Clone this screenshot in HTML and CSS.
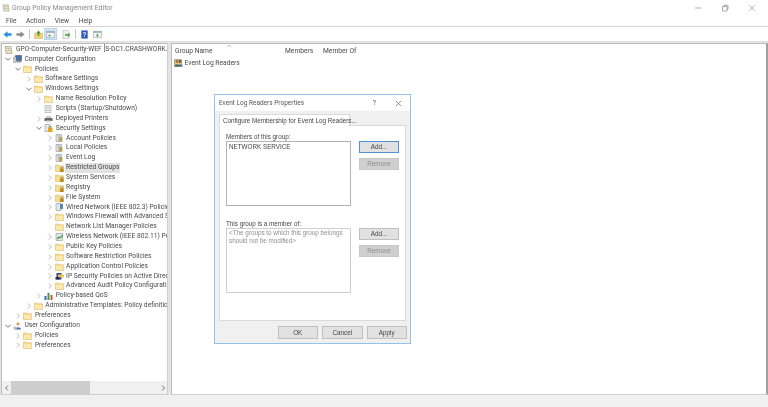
FILE: index.html
```html
<!DOCTYPE html>
<html lang="en">
<head>
<meta charset="utf-8">
<title>Group Policy Management Editor</title>
<link rel="stylesheet" href="styles.css">
</head>
<body>
<svg class="defs" width="0" height="0" aria-hidden="true">
  <symbol id="folder" viewBox="0 0 9 8"><path d="M.5 1h3l.8.8h4.200v5.700H.5z" fill="#f6dc8f" stroke="#dcbc6c" stroke-width=".6"/><path d="M1 3h7.200v4H1z" fill="#fbe9b0"/></symbol>
  <symbol id="lockfolder" viewBox="0 0 9 8"><path d="M.5 1h3l.8.8h4.200v5.700H.5z" fill="#f6dc8f" stroke="#dcbc6c" stroke-width=".6"/><path d="M5 4.500h3.600V8H5z" fill="#b98a1c"/><path d="M5.800 4.500V3.400h2v1.100" fill="none" stroke="#777" stroke-width=".6"/></symbol>
  <symbol id="doc" viewBox="0 0 9 8"><path d="M1 .5h6v7H1z" fill="#eef0f2" stroke="#9aa3aa" stroke-width=".6"/><path d="M2 2.500h4M2 4h4M2 5.500h4" stroke="#a8b0b8" stroke-width=".5"/></symbol>
  <symbol id="policy" viewBox="0 0 9 8"><path d="M1 .5h5.500v7H1z" fill="#dfe5ea" stroke="#8b949c" stroke-width=".6"/><path d="M3.500 3h4v4.500h-4z" fill="#b8a46a"/><path d="M2 2h3.500" stroke="#778" stroke-width=".5"/></symbol>
  <symbol id="printer" viewBox="0 0 9 8"><path d="M2 1h5v2H2z" fill="#ccc"/><path d="M.5 3h8v3H.5z" fill="#666"/><path d="M2 5.500h5v2H2z" fill="#ddd"/></symbol>
  <symbol id="shield" viewBox="0 0 9 8"><path d="M1 .5h5v7H1z" fill="#e5e8ea" stroke="#8b949c" stroke-width=".6"/><path d="M4 3.500h4.500V8H4z" fill="#e0a41e"/><path d="M5.200 3.500V2.400h2v1.100" fill="none" stroke="#666" stroke-width=".6"/></symbol>
  <symbol id="wired" viewBox="0 0 9 8"><path d="M1 .5h5v7H1z" fill="#e3e7eb" stroke="#8b949c" stroke-width=".6"/><path d="M5 1h3v5H5z" fill="#5b86b8"/></symbol>
  <symbol id="wireless" viewBox="0 0 9 8"><path d="M1 .5h6.500v7H1z" fill="#e3e7eb" stroke="#8b949c" stroke-width=".6"/><path d="M2 6l2-2 1.200 1L8 1.500" fill="none" stroke="#3a9a3a" stroke-width="1.100"/></symbol>
  <symbol id="ipsec" viewBox="0 0 9 8"><path d="M1.500 1h5v6.500h-5z" fill="#33477f"/><path d="M3 2.500h6v3H3z" fill="#e5c65a"/><path d="M.5 5h4v2.500h-4z" fill="#222c55"/></symbol>
  <symbol id="qos" viewBox="0 0 9 8"><path d="M.5 4h2v4h-2z" fill="#2b6cb8"/><path d="M3.500 1h2v7h-2z" fill="#3f9a48"/><path d="M6.500 3h2v5h-2z" fill="#d9542e"/></symbol>
  <symbol id="computer" viewBox="0 0 9 8"><path d="M2.500 .5h6v5h-6z" fill="#4a6fa8" stroke="#2c3e66" stroke-width=".5"/><path d="M.5 2h2.500v5.500H.5z" fill="#cfd5dc" stroke="#677" stroke-width=".4"/><path d="M3.500 6h5v1.500h-5z" fill="#8a97a8"/></symbol>
  <symbol id="user" viewBox="0 0 9 8"><circle cx="5" cy="2" r="1.700" fill="#d7a877"/><path d="M2 7.500c0-3 6-3 6 0z" fill="#4a76b0"/><path d="M.5 4.500h3v3h-3z" fill="#b8c4d0"/></symbol>
  <symbol id="gpo" viewBox="0 0 9 8"><path d="M1 .5h6l1 7H2z" fill="#ede4c8" stroke="#9b9278" stroke-width=".6"/><path d="M2.500 2.500h4M2.500 4.500h4" stroke="#998" stroke-width=".5"/></symbol>
  <symbol id="group" viewBox="0 0 9 8"><path d="M.5 .5h7v7h-7z" fill="#d9c68d" stroke="#7d6b3c" stroke-width=".5"/><circle cx="3" cy="2.500" r="1.400" fill="#a8763c"/><circle cx="6" cy="2.500" r="1.400" fill="#7a5a30"/><path d="M.8 7.500c0-3 4.500-3 4.500 0z" fill="#3e6a3a"/><path d="M4 7.500c0-3 4.800-3 4.800 0z" fill="#4d73a8"/></symbol>
  <symbol id="open" viewBox="0 0 8 8"><path d="M2.800 1.500l2.500 2.500-2.500 2.500" fill="none" stroke="#adadad" stroke-width=".8"/></symbol>
  <symbol id="down" viewBox="0 0 8 8"><path d="M1.500 2.800l2.500 2.500 2.500-2.500" fill="none" stroke="#555" stroke-width=".8"/></symbol>
</svg>

<div class="window">
  <header class="titlebar">
    <svg class="ti"><use href="#gpo"/></svg>
    <span class="title">Group Policy Management Editor</span>
    <span class="winbtns">
      <svg class="wb" viewBox="0 0 8 8"><path d="M1 4h6" stroke="#999" stroke-width=".8"/></svg>
      <svg class="wb" viewBox="0 0 8 8"><path d="M1.500 2.500h4.500v4.500H1.500zM3 2.500V1.200h4v4H6" fill="none" stroke="#888" stroke-width=".7"/></svg>
      <svg class="wb" viewBox="0 0 8 8"><path d="M1.200 1.200l5.600 5.600M6.800 1.200L1.200 6.800" stroke="#999" stroke-width=".7"/></svg>
    </span>
  </header>
  <nav class="menubar"><span>File</span><span>Action</span><span>View</span><span>Help</span></nav>
  <div class="toolbar">
    <svg class="tb" viewBox="0 0 10 10"><path d="M.5 5L5 1.500v2h4.500v3H5v2z" fill="#2a8fdc"/></svg>
    <svg class="tb" viewBox="0 0 10 10"><path d="M9.500 5L5 1.500v2H.5v3H5v2z" fill="#8c8c8c"/></svg>
    <i class="sep"></i>
    <svg class="tb" viewBox="0 0 10 10"><path d="M.5 3.500h9v6h-9z" fill="#eed27a" stroke="#c9a94e" stroke-width=".5"/><path d="M5 .5L2.500 3.500h1.500v3h2v-3h1.500z" fill="#4a9a3a"/></svg>
    <span class="tb-on"><svg class="tb" viewBox="0 0 10 10"><path d="M.5 1.500h9v7h-9z" fill="#f4f6f7" stroke="#8b949c" stroke-width=".6"/><path d="M.5 1.500h9v1.500h-9z" fill="#8fa3b0"/><path d="M4 5l2 2H2z" fill="#4a9a3a"/></svg></span>
    <svg class="tb gapl" viewBox="0 0 10 10"><path d="M1 .5h5l2 2v7H1z" fill="#f1f2f3" stroke="#a5abb0" stroke-width=".6"/><path d="M3.500 4.500h3v-1.500l3 2.500-3 2.500v-1.500h-3z" fill="#56a83e"/></svg>
    <i class="sep"></i>
    <svg class="tb" viewBox="0 0 10 10"><path d="M1.500 .5h7v9h-7z" fill="#2b55b8"/><text x="5" y="7.500" text-anchor="middle" class="q">?</text></svg>
    <svg class="tb" viewBox="0 0 10 10"><path d="M.5 1.500h9v7h-9z" fill="#f1f4f5" stroke="#8b949c" stroke-width=".6"/><path d="M.5 1.500h9v1.500h-9z" fill="#8fa3b0"/><path d="M4 4l2.500 2L4 8z" fill="#4a9a3a"/></svg>
  </div>

  <main class="panes">
    <section class="left">
      <div class="tree">
        <div class="row d0 root"><svg class="ic"><use href="#gpo"/></svg><span class="tx">GPO-Computer-Security-WEF [S-DC1.CRASHWORK.COM] Policy</span></div>
        <div class="row d0"><svg class="ar"><use href="#down"/></svg><svg class="ic"><use href="#computer"/></svg><span class="tx">Computer Configuration</span></div>
        <div class="row d1"><svg class="ar"><use href="#down"/></svg><svg class="ic"><use href="#folder"/></svg><span class="tx">Policies</span></div>
        <div class="row d2"><svg class="ar"><use href="#open"/></svg><svg class="ic"><use href="#folder"/></svg><span class="tx">Software Settings</span></div>
        <div class="row d2"><svg class="ar"><use href="#down"/></svg><svg class="ic"><use href="#folder"/></svg><span class="tx">Windows Settings</span></div>
        <div class="row d3"><svg class="ar"><use href="#open"/></svg><svg class="ic"><use href="#folder"/></svg><span class="tx">Name Resolution Policy</span></div>
        <div class="row d3"><i class="ar"></i><svg class="ic"><use href="#doc"/></svg><span class="tx">Scripts (Startup/Shutdown)</span></div>
        <div class="row d3"><svg class="ar"><use href="#open"/></svg><svg class="ic"><use href="#printer"/></svg><span class="tx">Deployed Printers</span></div>
        <div class="row d3"><svg class="ar"><use href="#down"/></svg><svg class="ic"><use href="#shield"/></svg><span class="tx">Security Settings</span></div>
        <div class="row d4"><svg class="ar"><use href="#open"/></svg><svg class="ic"><use href="#policy"/></svg><span class="tx">Account Policies</span></div>
        <div class="row d4"><svg class="ar"><use href="#open"/></svg><svg class="ic"><use href="#policy"/></svg><span class="tx">Local Policies</span></div>
        <div class="row d4"><svg class="ar"><use href="#open"/></svg><svg class="ic"><use href="#policy"/></svg><span class="tx">Event Log</span></div>
        <div class="row d4"><svg class="ar"><use href="#open"/></svg><svg class="ic"><use href="#lockfolder"/></svg><span class="tx sel">Restricted Groups</span></div>
        <div class="row d4"><svg class="ar"><use href="#open"/></svg><svg class="ic"><use href="#lockfolder"/></svg><span class="tx">System Services</span></div>
        <div class="row d4"><svg class="ar"><use href="#open"/></svg><svg class="ic"><use href="#lockfolder"/></svg><span class="tx">Registry</span></div>
        <div class="row d4"><svg class="ar"><use href="#open"/></svg><svg class="ic"><use href="#lockfolder"/></svg><span class="tx">File System</span></div>
        <div class="row d4"><svg class="ar"><use href="#open"/></svg><svg class="ic"><use href="#wired"/></svg><span class="tx">Wired Network (IEEE 802.3) Policies</span></div>
        <div class="row d4"><svg class="ar"><use href="#open"/></svg><svg class="ic"><use href="#folder"/></svg><span class="tx">Windows Firewall with Advanced Security</span></div>
        <div class="row d4"><i class="ar"></i><svg class="ic"><use href="#folder"/></svg><span class="tx">Network List Manager Policies</span></div>
        <div class="row d4"><svg class="ar"><use href="#open"/></svg><svg class="ic"><use href="#wireless"/></svg><span class="tx">Wireless Network (IEEE 802.11) Policies</span></div>
        <div class="row d4"><svg class="ar"><use href="#open"/></svg><svg class="ic"><use href="#folder"/></svg><span class="tx">Public Key Policies</span></div>
        <div class="row d4"><svg class="ar"><use href="#open"/></svg><svg class="ic"><use href="#folder"/></svg><span class="tx">Software Restriction Policies</span></div>
        <div class="row d4"><svg class="ar"><use href="#open"/></svg><svg class="ic"><use href="#folder"/></svg><span class="tx">Application Control Policies</span></div>
        <div class="row d4"><svg class="ar"><use href="#open"/></svg><svg class="ic"><use href="#ipsec"/></svg><span class="tx">IP Security Policies on Active Directory</span></div>
        <div class="row d4"><svg class="ar"><use href="#open"/></svg><svg class="ic"><use href="#folder"/></svg><span class="tx">Advanced Audit Policy Configuration</span></div>
        <div class="row d3"><svg class="ar"><use href="#open"/></svg><svg class="ic"><use href="#qos"/></svg><span class="tx">Policy-based QoS</span></div>
        <div class="row d2"><svg class="ar"><use href="#open"/></svg><svg class="ic"><use href="#folder"/></svg><span class="tx">Administrative Templates: Policy definitions</span></div>
        <div class="row d1"><svg class="ar"><use href="#open"/></svg><svg class="ic"><use href="#folder"/></svg><span class="tx">Preferences</span></div>
        <div class="row d0"><svg class="ar"><use href="#down"/></svg><svg class="ic"><use href="#user"/></svg><span class="tx">User Configuration</span></div>
        <div class="row d1"><svg class="ar"><use href="#open"/></svg><svg class="ic"><use href="#folder"/></svg><span class="tx">Policies</span></div>
        <div class="row d1"><svg class="ar"><use href="#open"/></svg><svg class="ic"><use href="#folder"/></svg><span class="tx">Preferences</span></div>
      </div>
      <div class="hscroll">
        <svg class="sa" viewBox="0 0 8 8"><path d="M5 1.500L2.500 4 5 6.500" fill="none" stroke="#666" stroke-width=".9"/></svg>
        <div class="track"><div class="thumb"></div></div>
        <svg class="sa" viewBox="0 0 8 8"><path d="M3 1.500L5.500 4 3 6.500" fill="none" stroke="#666" stroke-width=".9"/></svg>
      </div>
    </section>
    <section class="right">
      <div class="listhead">
        <span class="c1">Group Name</span><span class="c2">Members</span><span class="c3">Member Of</span>
        <svg class="caret" viewBox="0 0 6 4"><path d="M.8 3.200L3 1l2.200 2.200" fill="none" stroke="#aaa" stroke-width=".7"/></svg>
      </div>
      <div class="listrow"><svg class="ic"><use href="#group"/></svg><span>Event Log Readers</span></div>
    </section>
  </main>
  <footer class="status"></footer>
</div>

<div class="dialog">
  <div class="dlg-title"><span>Event Log Readers Properties</span>
    <span class="dlg-btns"><b class="help">?</b>
      <svg class="dlg-x" viewBox="0 0 8 8"><path d="M1 1l6 6M7 1L1 7" stroke="#555" stroke-width=".7"/></svg>
    </span>
  </div>
  <div class="tabs"><span class="tab">Configure Membership for Event Log Readers...</span></div>
  <div class="panel">
    <div class="label">Members of this group:</div>
    <div class="split">
      <div class="listbox"><span class="item">NETWORK SERVICE</span></div>
      <div class="sidebtns"><button class="btn primary">Add...</button><button class="btn off">Remove</button></div>
    </div>
    <div class="label second">This group is a member of:</div>
    <div class="split">
      <div class="listbox muted"><span class="item">&lt;The groups to which this group belongs<br>should not be modified&gt;</span></div>
      <div class="sidebtns"><button class="btn">Add...</button><button class="btn off">Remove</button></div>
    </div>
  </div>
  <div class="dlg-foot"><button class="btn">OK</button><button class="btn">Cancel</button><button class="btn">Apply</button></div>
</div>
</body>
</html>
```

FILE: styles.css
```css
* { box-sizing: border-box; }
html, body { margin: 0; height: 100%; overflow: hidden; background: #fff; }
body { position: relative; width: 768px; height: 407px; font-family: Roboto, sans-serif; font-size: 6.700px; color: #4a4a4a; filter: blur(.4px); }
.defs { position: absolute; }

.window { display: flex; flex-direction: column; height: 407px; }
.titlebar { height: 15px; display: flex; align-items: center; padding-left: 2px; background: #fff; flex: none; }
.ti { width: 8px; height: 8px; }
.title { margin-left: 2px; color: #8a8a8a; font-size: 6.900px; padding-top: 1px; }
.winbtns { margin-left: auto; display: flex; gap: 19px; padding-right: 12px; }
.wb { width: 8px; height: 8px; }

.menubar { height: 12px; flex: none; display: flex; align-items: center; padding-left: 6px; gap: 9.500px; border-bottom: 1px solid #d4d4d4; }
.toolbar { height: 14px; flex: none; display: flex; align-items: center; padding-left: 3px; gap: 4px; background: #fff; }
.tb { width: 9px; height: 9px; flex: none; display: block; }
.tb-on { background: #d5e8f6; border: 1px solid #b5d5ec; padding: .500px 1px; margin-left: -3px; }
.gapl { margin-left: 1px; }
.sep { width: 1px; height: 10px; background: #c8c8c8; }
.q { fill: #fff; font-size: 7px; font-family: "Liberation Sans", sans-serif; font-weight: 700; }

.panes { flex: 1; min-height: 0; display: flex; gap: 3px; background: #e4e4e4; padding: 1px 0 0 1px; border-top: 1px solid #e0e0e0; }
.left { width: 167px; flex: none; background: #fff; display: flex; flex-direction: column; border-top: 1px solid #bcbcbc; border-left: 1px solid #bcbcbc; border-right: 1px solid #cfcfcf; border-bottom: 1px solid #cfcfcf; overflow: hidden; }
.tree { flex: 1; min-height: 0; overflow: hidden; padding-top: .700px; }
.row { display: flex; align-items: center; height: 9.870px; white-space: nowrap; }
.d0 { padding-left: 2px; }
.d1 { padding-left: 12.400px; }
.d2 { padding-left: 22.800px; }
.d3 { padding-left: 33.200px; }
.d4 { padding-left: 43.600px; }
.ar { width: 8px; height: 8px; flex: none; display: block; margin-right: 1px; }
.ic { width: 9px; height: 8px; flex: none; margin-right: 1.500px; }
.root .ic { margin-right: 2px; }
.tx { padding: 0 1px; line-height: 9.500px; }
.sel { background: #e2e2e2; }
.hscroll { height: 13px; flex: none; display: flex; align-items: center; background: #f0f0f0; }
.sa { width: 8px; height: 8px; flex: none; margin: 0 .500px; }
.track { flex: 1; height: 100%; }
.thumb { width: 79px; height: 100%; background: #cdcdcd; }

.right { flex: 1; background: #fff; border-top: 1px solid #bcbcbc; border-left: 1px solid #bcbcbc; border-right: 2px solid #a0a0a0; border-bottom: 1px solid #cfcfcf; padding-left: 2px; }
.listhead { display: flex; height: 12px; align-items: center; padding-top: 1px; position: relative; }
.c1 { width: 111px; padding-left: 1px; }
.c2 { width: 38px; }
.caret { position: absolute; left: 52px; top: 0; width: 6px; height: 4px; }
.listrow { display: flex; align-items: center; height: 11px; padding-top: 2px; }
.status { height: 12px; flex: none; background: #f0f0f0; }

.dialog { position: absolute; left: 214px; top: 94px; width: 197px; height: 250px; background: #f0f0f0; border: 1px solid #94c2e6; display: flex; flex-direction: column; font-family: "Liberation Sans", sans-serif; font-size: 6.300px; color: #444; padding: 0 3px 0 4px; }
.dlg-title { height: 16px; flex: none; display: flex; align-items: center; justify-content: space-between; background: #fff; margin: 0 -3px 3px -4px; padding: 0 8px 0 4px; font-family: Roboto, sans-serif; font-size: 6.500px; color: #555; }
.dlg-btns { display: flex; align-items: center; gap: 19px; }
.help { font-weight: 400; font-size: 7px; }
.dlg-x { width: 7px; height: 7px; }
.tabs { display: flex; flex: none; height: 12px; background: #f0f0f0; }
.tab { width: 131px; background: #fff; border: 1px solid #d9d9d9; border-bottom: 0; display: flex; align-items: center; padding-left: 3px; white-space: nowrap; position: relative; z-index: 1; }
.panel { flex: none; height: 196px; background: #fff; border: 1px solid #d9d9d9; padding: 6px 6px 0 6px; width: 187px; margin-top: -1px; }
.label { height: 9px; line-height: 9px; white-space: nowrap; }
.second { margin-top: 12.500px; }
.split { display: flex; gap: 8px; margin-top: 0; }
.listbox { width: 125px; height: 65px; border: 1px solid #b4b4b4; padding: 0 2px; line-height: 7.500px; background: #fff; }
.listbox.muted { color: #909090; border-color: #cfcfcf; }
.listbox .item { display: block; padding-top: .500px; }
.sidebtns { display: flex; flex-direction: column; gap: 5px; }
.btn { width: 40px; height: 12px; padding: 0; border: 1px solid #c0c0c0; background: #e1e1e1; font: inherit; color: #444; line-height: 10px; }
.btn.primary { border-color: #4d94d0; }
.btn.off { background: #cfcfcf; border-color: #c8c8c8; color: #8c8c8c; }
.dlg-foot { display: flex; justify-content: flex-end; gap: 4px; padding-top: 5px; }
.dlg-foot .btn { width: 40.500px; height: 13px; }
```
